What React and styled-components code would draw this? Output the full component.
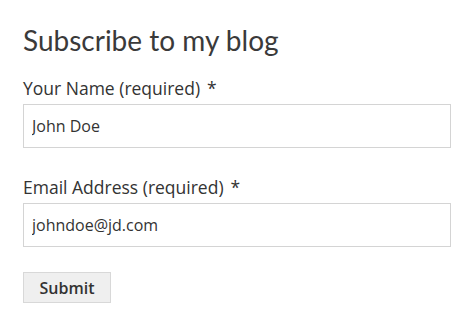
import React from 'react';
import styled, { createGlobalStyle } from 'styled-components';

const GlobalStyle = createGlobalStyle`
  html, body {
    margin: 0;
    padding: 0;
    background: #ffffff;
  }
  body {
    font-family: 'Open Sans', 'Liberation Sans', sans-serif;
    color: #333333;
  }
`;

const Page = styled.div`
  width: 474px;
  height: 336px;
  box-sizing: border-box;
  padding: 22px 23px 0 23px;
`;

const Title = styled.h2`
  font-family: Lato, 'Open Sans', sans-serif;
  font-size: 28px;
  font-weight: 400;
  line-height: 36px;
  color: #3a3a3a;
  margin: 0 0 18px 0;
`;

const Form = styled.form`
  display: flex;
  flex-direction: column;
`;

const Field = styled.div`
  display: flex;
  flex-direction: column;
  gap: 4px;
  margin-bottom: 27px;
`;

const Label = styled.label`
  font-size: 17.5px;
  line-height: 24px;
  color: #333333;
`;

const Required = styled.span`
  margin-left: 7px;
`;

const Input = styled.input`
  box-sizing: border-box;
  width: 428px;
  height: 44px;
  border: 1px solid #d4d4d4;
  border-radius: 0;
  padding: 0 8px;
  font-family: 'Open Sans', sans-serif;
  font-size: 16px;
  color: #333333;
  background: #ffffff;
  outline: none;
`;

const Button = styled.button`
  align-self: flex-start;
  box-sizing: border-box;
  width: 88px;
  height: 31px;
  margin-top: -2px;
  border: 1px solid #d8d8d8;
  border-radius: 0;
  background: #efefef;
  font-family: 'Open Sans', sans-serif;
  font-size: 16px;
  font-weight: 600;
  color: #333333;
  cursor: pointer;
`;

const fields = [
  { id: 'name', label: 'Your Name (required)', value: 'John Doe', type: 'text' },
  { id: 'email', label: 'Email Address (required)', value: 'johndoe@jd.com', type: 'email' },
];

export default function App() {
  return (
    <>
      <GlobalStyle />
      <Page>
        <Title>Subscribe to my blog</Title>
        <Form onSubmit={(e) => e.preventDefault()}>
          {fields.map((f) => (
            <Field key={f.id}>
              <Label htmlFor={f.id}>
                {f.label}
                <Required>*</Required>
              </Label>
              <Input id={f.id} type={f.type} defaultValue={f.value} />
            </Field>
          ))}
          <Button type="submit">Submit</Button>
        </Form>
      </Page>
    </>
  );
}
